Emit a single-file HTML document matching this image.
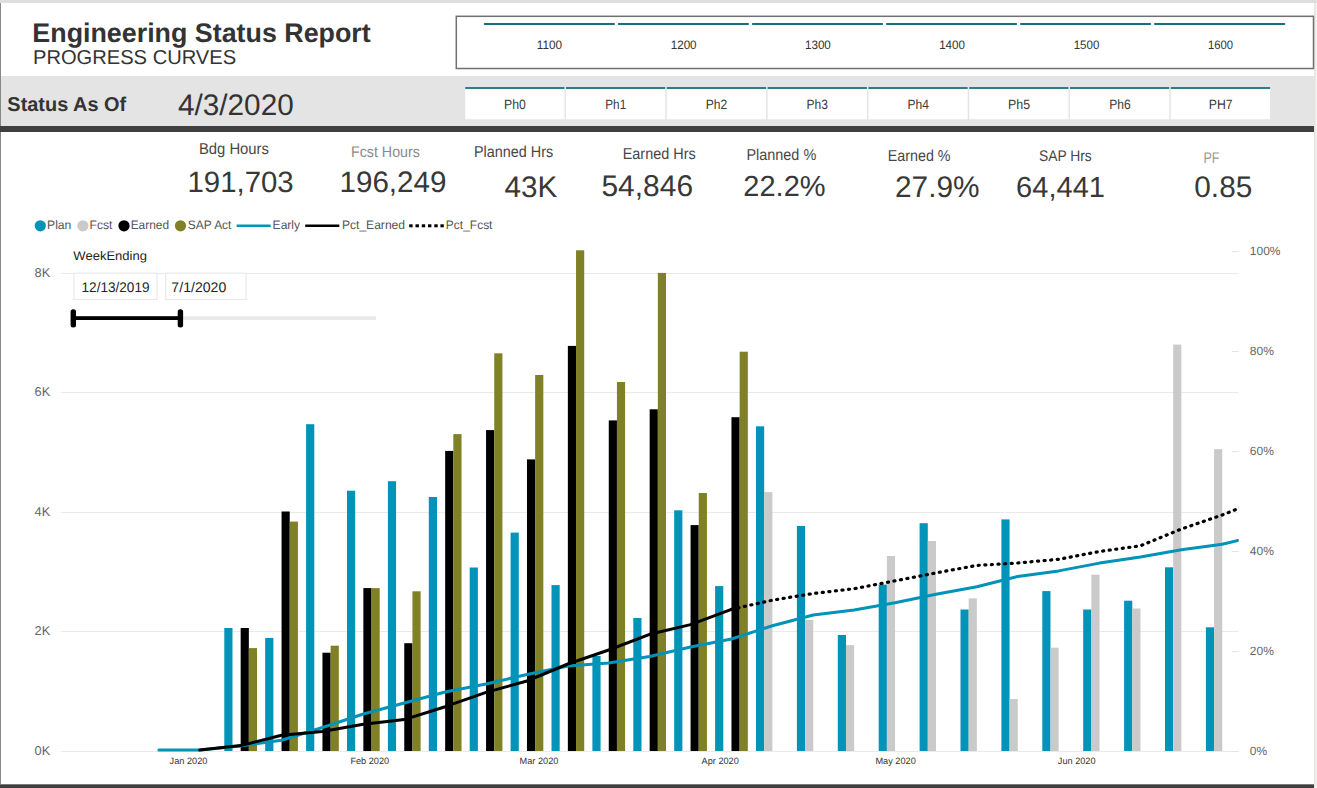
<!DOCTYPE html>
<html><head><meta charset="utf-8"><title>Engineering Status Report</title>
<style>
html,body{margin:0;padding:0;background:#F3F2F1;overflow:hidden;}
svg{display:block;font-family:"Liberation Sans", sans-serif;text-rendering:geometricPrecision;}
</style></head>
<body>
<svg width="1317" height="788" viewBox="0 0 1317 788">
<defs><clipPath id="pc"><rect x="61" y="240" width="1177.7" height="520"/></clipPath></defs>
<rect x="0" y="0" width="1317" height="788" fill="#F3F2F1"/>
<rect x="0" y="0" width="1314" height="788" fill="#FFFFFF"/>
<rect x="1314" y="0" width="1.5" height="788" fill="#E5E5E5"/>
<rect x="0" y="0" width="1317" height="3" fill="#DEDEDE"/>
<rect x="0" y="3" width="1" height="781" fill="#888888"/>
<rect x="0" y="784" width="1314" height="1" fill="#7A7A7A"/>
<rect x="0" y="785" width="1314" height="3" fill="#404040"/>
<!-- title -->
<!-- slicer box -->
<rect x="456.3" y="16.3" width="857.2" height="52.2" fill="#FFF" stroke="#707070" stroke-width="1.5"/>
<rect x="483.70" y="22.9" width="131.3" height="2" rx="1" fill="#15707F"/><rect x="617.76" y="22.9" width="131.3" height="2" rx="1" fill="#15707F"/><rect x="751.82" y="22.9" width="131.3" height="2" rx="1" fill="#15707F"/><rect x="885.88" y="22.9" width="131.3" height="2" rx="1" fill="#15707F"/><rect x="1019.94" y="22.9" width="131.3" height="2" rx="1" fill="#15707F"/><rect x="1154.00" y="22.9" width="131.3" height="2" rx="1" fill="#15707F"/>
<!-- gray band -->
<rect x="1" y="76" width="1313" height="50" fill="#E4E4E4"/>
<rect x="0" y="126" width="1314" height="6" fill="#404040"/>
<rect x="465.2" y="87" width="99.3" height="32.3" fill="#FFFFFF"/><rect x="465.2" y="87" width="99.3" height="2" fill="#2B7E8C"/><rect x="566.0" y="87" width="99.3" height="32.3" fill="#FFFFFF"/><rect x="566.0" y="87" width="99.3" height="2" fill="#2B7E8C"/><rect x="666.8" y="87" width="99.3" height="32.3" fill="#FFFFFF"/><rect x="666.8" y="87" width="99.3" height="2" fill="#2B7E8C"/><rect x="767.6" y="87" width="99.3" height="32.3" fill="#FFFFFF"/><rect x="767.6" y="87" width="99.3" height="2" fill="#2B7E8C"/><rect x="868.4" y="87" width="99.3" height="32.3" fill="#FFFFFF"/><rect x="868.4" y="87" width="99.3" height="2" fill="#2B7E8C"/><rect x="969.2" y="87" width="99.3" height="32.3" fill="#FFFFFF"/><rect x="969.2" y="87" width="99.3" height="2" fill="#2B7E8C"/><rect x="1070.0" y="87" width="99.3" height="32.3" fill="#FFFFFF"/><rect x="1070.0" y="87" width="99.3" height="2" fill="#2B7E8C"/><rect x="1170.8" y="87" width="99.3" height="32.3" fill="#FFFFFF"/><rect x="1170.8" y="87" width="99.3" height="2" fill="#2B7E8C"/>
<!-- KPIs -->
<!-- legend -->
<circle cx="40.3" cy="225.8" r="5.6" fill="#0193B8"/><circle cx="82.9" cy="225.8" r="5.6" fill="#CACACA"/><circle cx="124.0" cy="225.8" r="5.6" fill="#000000"/><circle cx="180.5" cy="225.8" r="5.6" fill="#808026"/><line x1="236.6" y1="225.7" x2="270.6" y2="225.7" stroke="#0193B8" stroke-width="2.5"/><line x1="305.2" y1="225.7" x2="339.3" y2="225.7" stroke="#000" stroke-width="2.5"/><rect x="409.20" y="224.3" width="3.4" height="3" fill="#000"/><rect x="415.50" y="224.3" width="3.4" height="3" fill="#000"/><rect x="421.80" y="224.3" width="3.4" height="3" fill="#000"/><rect x="428.00" y="224.3" width="3.4" height="3" fill="#000"/><rect x="434.30" y="224.3" width="3.4" height="3" fill="#000"/><rect x="440.40" y="224.3" width="3.4" height="3" fill="#000"/>
<!-- chart -->
<line x1="61" y1="273.5" x2="1238.7" y2="273.5" stroke="#EAEAEA" stroke-width="1"/>
<line x1="61" y1="392.5" x2="1238.7" y2="392.5" stroke="#EAEAEA" stroke-width="1"/>
<line x1="61" y1="512.5" x2="1238.7" y2="512.5" stroke="#EAEAEA" stroke-width="1"/>
<line x1="61" y1="631.5" x2="1238.7" y2="631.5" stroke="#EAEAEA" stroke-width="1"/>
<line x1="61" y1="751.5" x2="1238.7" y2="751.5" stroke="#EAEAEA" stroke-width="1"/>
<line x1="1232" y1="251.5" x2="1238.7" y2="251.5" stroke="#E6E6E6" stroke-width="1"/>
<line x1="1232" y1="351.5" x2="1238.7" y2="351.5" stroke="#E6E6E6" stroke-width="1"/>
<line x1="1232" y1="451.5" x2="1238.7" y2="451.5" stroke="#E6E6E6" stroke-width="1"/>
<line x1="1232" y1="551.5" x2="1238.7" y2="551.5" stroke="#E6E6E6" stroke-width="1"/>
<line x1="1232" y1="651.5" x2="1238.7" y2="651.5" stroke="#E6E6E6" stroke-width="1"/>
<line x1="1232" y1="751.5" x2="1238.7" y2="751.5" stroke="#E6E6E6" stroke-width="1"/>
<text x="50.2" y="277.3" text-anchor="end" font-size="12.8" fill="#666">8K</text>
<text x="50.2" y="396.3" text-anchor="end" font-size="12.8" fill="#666">6K</text>
<text x="50.2" y="516.3" text-anchor="end" font-size="12.8" fill="#666">4K</text>
<text x="50.2" y="635.3" text-anchor="end" font-size="12.8" fill="#666">2K</text>
<text x="50.2" y="755.3" text-anchor="end" font-size="12.8" fill="#666">0K</text>
<text x="1249.8" y="754.9" font-size="12" fill="#666">0%</text>
<text x="1249.8" y="654.9" font-size="12" fill="#666">20%</text>
<text x="1249.8" y="554.9" font-size="12" fill="#666">40%</text>
<text x="1249.8" y="454.9" font-size="12" fill="#666">60%</text>
<text x="1249.8" y="354.9" font-size="12" fill="#666">80%</text>
<text x="1249.8" y="254.9" font-size="12" fill="#666">100%</text>
<text x="188.5" y="764.3" text-anchor="middle" font-size="9.2" fill="#333">Jan 2020</text>
<text x="369.8" y="764.3" text-anchor="middle" font-size="9.2" fill="#333">Feb 2020</text>
<text x="539" y="764.3" text-anchor="middle" font-size="9.2" fill="#333">Mar 2020</text>
<text x="720.2" y="764.3" text-anchor="middle" font-size="9.2" fill="#333">Apr 2020</text>
<text x="895.6" y="764.3" text-anchor="middle" font-size="9.2" fill="#333">May 2020</text>
<text x="1076.7" y="764.3" text-anchor="middle" font-size="9.2" fill="#333">Jun 2020</text>
<rect x="224.30" y="628.0" width="8.18" height="123.0" fill="#0193B8"/>
<rect x="240.66" y="628.0" width="8.18" height="123.0" fill="#000000"/>
<rect x="248.84" y="648.1" width="8.18" height="102.9" fill="#808026"/>
<rect x="265.20" y="637.9" width="8.18" height="113.1" fill="#0193B8"/>
<rect x="281.56" y="511.5" width="8.18" height="239.5" fill="#000000"/>
<rect x="289.74" y="521.6" width="8.18" height="229.4" fill="#808026"/>
<rect x="306.10" y="424.2" width="8.18" height="326.8" fill="#0193B8"/>
<rect x="322.46" y="652.7" width="8.18" height="98.3" fill="#000000"/>
<rect x="330.64" y="645.7" width="8.18" height="105.3" fill="#808026"/>
<rect x="347.00" y="490.7" width="8.18" height="260.3" fill="#0193B8"/>
<rect x="363.36" y="588.1" width="8.18" height="162.9" fill="#000000"/>
<rect x="371.54" y="588.1" width="8.18" height="162.9" fill="#808026"/>
<rect x="387.90" y="481.2" width="8.18" height="269.8" fill="#0193B8"/>
<rect x="404.26" y="643.2" width="8.18" height="107.8" fill="#000000"/>
<rect x="412.44" y="591.3" width="8.18" height="159.7" fill="#808026"/>
<rect x="428.80" y="497.0" width="8.18" height="254.0" fill="#0193B8"/>
<rect x="445.16" y="450.9" width="8.18" height="300.1" fill="#000000"/>
<rect x="453.34" y="434.1" width="8.18" height="316.9" fill="#808026"/>
<rect x="469.70" y="567.5" width="8.18" height="183.5" fill="#0193B8"/>
<rect x="486.06" y="430.1" width="8.18" height="320.9" fill="#000000"/>
<rect x="494.24" y="353.3" width="8.18" height="397.7" fill="#808026"/>
<rect x="510.60" y="532.6" width="8.18" height="218.4" fill="#0193B8"/>
<rect x="526.96" y="459.4" width="8.18" height="291.6" fill="#000000"/>
<rect x="535.14" y="375.0" width="8.18" height="376.0" fill="#808026"/>
<rect x="551.50" y="585.1" width="8.18" height="165.9" fill="#0193B8"/>
<rect x="567.86" y="345.9" width="8.18" height="405.1" fill="#000000"/>
<rect x="576.04" y="250.3" width="8.18" height="500.7" fill="#808026"/>
<rect x="592.40" y="656.0" width="8.18" height="95.0" fill="#0193B8"/>
<rect x="608.76" y="420.4" width="8.18" height="330.6" fill="#000000"/>
<rect x="616.94" y="382.0" width="8.18" height="369.0" fill="#808026"/>
<rect x="633.30" y="618.0" width="8.18" height="133.0" fill="#0193B8"/>
<rect x="649.66" y="409.3" width="8.18" height="341.7" fill="#000000"/>
<rect x="657.84" y="272.9" width="8.18" height="478.1" fill="#808026"/>
<rect x="674.20" y="510.3" width="8.18" height="240.7" fill="#0193B8"/>
<rect x="690.56" y="525.1" width="8.18" height="225.9" fill="#000000"/>
<rect x="698.74" y="493.0" width="8.18" height="258.0" fill="#808026"/>
<rect x="715.10" y="586.1" width="8.18" height="164.9" fill="#0193B8"/>
<rect x="731.46" y="417.2" width="8.18" height="333.8" fill="#000000"/>
<rect x="739.64" y="351.7" width="8.18" height="399.3" fill="#808026"/>
<rect x="756.00" y="426.3" width="8.18" height="324.7" fill="#0193B8"/>
<rect x="764.18" y="492.1" width="8.18" height="258.9" fill="#CACACA"/>
<rect x="796.90" y="525.9" width="8.18" height="225.1" fill="#0193B8"/>
<rect x="805.08" y="619.8" width="8.18" height="131.2" fill="#CACACA"/>
<rect x="837.80" y="635.0" width="8.18" height="116.0" fill="#0193B8"/>
<rect x="845.98" y="645.1" width="8.18" height="105.9" fill="#CACACA"/>
<rect x="878.70" y="584.6" width="8.18" height="166.4" fill="#0193B8"/>
<rect x="886.88" y="556.0" width="8.18" height="195.0" fill="#CACACA"/>
<rect x="919.60" y="523.2" width="8.18" height="227.8" fill="#0193B8"/>
<rect x="927.78" y="541.0" width="8.18" height="210.0" fill="#CACACA"/>
<rect x="960.50" y="609.5" width="8.18" height="141.5" fill="#0193B8"/>
<rect x="968.68" y="598.4" width="8.18" height="152.6" fill="#CACACA"/>
<rect x="1001.40" y="519.4" width="8.18" height="231.6" fill="#0193B8"/>
<rect x="1009.58" y="699.0" width="8.18" height="52.0" fill="#CACACA"/>
<rect x="1042.30" y="591.1" width="8.18" height="159.9" fill="#0193B8"/>
<rect x="1050.48" y="647.7" width="8.18" height="103.3" fill="#CACACA"/>
<rect x="1083.20" y="609.5" width="8.18" height="141.5" fill="#0193B8"/>
<rect x="1091.38" y="574.7" width="8.18" height="176.3" fill="#CACACA"/>
<rect x="1124.10" y="600.7" width="8.18" height="150.3" fill="#0193B8"/>
<rect x="1132.28" y="608.5" width="8.18" height="142.5" fill="#CACACA"/>
<rect x="1165.00" y="567.3" width="8.18" height="183.7" fill="#0193B8"/>
<rect x="1173.18" y="344.6" width="8.18" height="406.4" fill="#CACACA"/>
<rect x="1205.90" y="627.3" width="8.18" height="123.7" fill="#0193B8"/>
<rect x="1214.08" y="449.2" width="8.18" height="301.8" fill="#CACACA"/>
<g clip-path="url(#pc)">
<polyline points="158.86,750.00 199.76,750.00 240.66,746.00 281.56,740.20 322.46,727.50 363.36,714.00 404.26,703.00 445.16,692.00 486.06,684.00 526.96,674.50 567.86,666.00 608.76,663.00 649.66,656.50 690.56,647.00 731.46,639.00 772.36,625.80 813.26,615.00 854.16,610.00 895.06,602.70 935.96,594.20 976.86,586.70 1017.76,576.40 1058.66,570.90 1099.56,563.10 1140.46,557.00 1181.36,549.70 1222.26,544.20 1263.16,534.70" fill="none" stroke="#0193B8" stroke-width="3" stroke-linejoin="round" stroke-linecap="round"/>
<polyline points="199.76,750.00 240.66,745.60 281.56,735.30 322.46,731.50 363.36,724.20 404.26,719.60 445.16,706.70 486.06,692.40 526.96,681.00 567.86,664.00 608.76,650.00 649.66,634.30 690.56,624.60 731.46,609.30" fill="none" stroke="#000000" stroke-width="3" stroke-linejoin="round" stroke-linecap="round"/>
<polyline points="731.46,609.30 772.36,600.20 813.26,593.50 854.16,588.70 895.06,580.80 935.96,572.90 976.86,565.40 1017.76,563.00 1058.66,559.30 1099.56,551.50 1140.46,545.80 1181.36,529.00 1222.26,515.00 1263.16,498.50" fill="none" stroke="#000000" stroke-width="3.2" stroke-dasharray="1.1 5.5" stroke-linecap="round"/>
</g>
<!-- week ending slicer -->
<rect x="73.9" y="273.1" width="83.1" height="26.5" fill="#FFF" stroke="#E6E6E6" stroke-width="1"/>
<rect x="165.7" y="273.1" width="80.3" height="26.5" fill="#FFF" stroke="#E6E6E6" stroke-width="1"/>
<rect x="183" y="316.3" width="193" height="3.6" fill="#E8E8E8"/>
<rect x="72" y="316.2" width="109" height="3.8" fill="#000"/>
<rect x="70.6" y="309.3" width="5.4" height="18.3" rx="2.5" fill="#000"/>
<rect x="177.7" y="309.3" width="5.4" height="18.3" rx="2.5" fill="#000"/>
<text x="32.37" y="41.90" font-size="26.83" font-weight="bold" fill="#333333">Engineering Status Report</text>
<text x="32.98" y="64.30" font-size="20.14" font-weight="normal" fill="#333333">PROGRESS CURVES</text>
<text x="7.34" y="110.90" font-size="19.96" font-weight="bold" fill="#333333">Status As Of</text>
<text x="177.97" y="115.40" font-size="29.74" font-weight="normal" fill="#333333">4/3/2020</text>
<text x="198.89" y="154.10" font-size="15.80" font-weight="normal" fill="#474747" textLength="70.09" lengthAdjust="spacingAndGlyphs">Bdg Hours</text>
<text x="187.50" y="191.68" font-size="29.39" font-weight="normal" fill="#383838">191,703</text>
<text x="351.00" y="156.90" font-size="15.40" font-weight="normal" fill="#8A8A8A" textLength="68.85" lengthAdjust="spacingAndGlyphs">Fcst Hours</text>
<text x="339.47" y="192.10" font-size="29.60" font-weight="normal" fill="#383838">196,249</text>
<text x="473.93" y="157.10" font-size="15.80" font-weight="normal" fill="#474747" textLength="79.25" lengthAdjust="spacingAndGlyphs">Planned Hrs</text>
<text x="504.44" y="196.88" font-size="29.68" font-weight="normal" fill="#383838">43K</text>
<text x="622.67" y="159.00" font-size="15.80" font-weight="normal" fill="#474747" textLength="73.14" lengthAdjust="spacingAndGlyphs">Earned Hrs</text>
<text x="601.48" y="195.50" font-size="29.94" font-weight="normal" fill="#383838">54,846</text>
<text x="746.41" y="160.10" font-size="15.80" font-weight="normal" fill="#474747" textLength="69.84" lengthAdjust="spacingAndGlyphs">Planned %</text>
<text x="743.32" y="195.96" font-size="29.02" font-weight="normal" fill="#383838">22.2%</text>
<text x="887.81" y="160.50" font-size="15.80" font-weight="normal" fill="#474747" textLength="62.72" lengthAdjust="spacingAndGlyphs">Earned %</text>
<text x="895.03" y="196.60" font-size="29.84" font-weight="normal" fill="#383838">27.9%</text>
<text x="1038.91" y="160.50" font-size="15.40" font-weight="normal" fill="#474747" textLength="52.90" lengthAdjust="spacingAndGlyphs">SAP Hrs</text>
<text x="1016.10" y="196.84" font-size="29.07" font-weight="normal" fill="#383838">64,441</text>
<text x="1203.39" y="162.50" font-size="15.40" font-weight="normal" fill="#999999" textLength="16.15" lengthAdjust="spacingAndGlyphs">PF</text>
<text x="1194.30" y="197.20" font-size="29.79" font-weight="normal" fill="#383838">0.85</text>
<text x="47.09" y="228.90" font-size="12.30" font-weight="normal" fill="#555555" textLength="24.28" lengthAdjust="spacingAndGlyphs">Plan</text>
<text x="89.60" y="228.90" font-size="12.30" font-weight="normal" fill="#555555" textLength="22.86" lengthAdjust="spacingAndGlyphs">Fcst</text>
<text x="130.70" y="228.90" font-size="12.30" font-weight="normal" fill="#555555" textLength="38.37" lengthAdjust="spacingAndGlyphs">Earned</text>
<text x="187.81" y="228.90" font-size="12.30" font-weight="normal" fill="#555555" textLength="43.59" lengthAdjust="spacingAndGlyphs">SAP Act</text>
<text x="272.60" y="228.90" font-size="12.30" font-weight="normal" fill="#555555" textLength="27.50" lengthAdjust="spacingAndGlyphs">Early</text>
<text x="341.98" y="228.90" font-size="12.30" font-weight="normal" fill="#555555" textLength="63.05" lengthAdjust="spacingAndGlyphs">Pct_Earned</text>
<text x="445.87" y="228.90" font-size="12.30" font-weight="normal" fill="#555555" textLength="46.60" lengthAdjust="spacingAndGlyphs">Pct_Fcst</text>
<text x="73.39" y="260.00" font-size="12.50" font-weight="normal" fill="#252423" textLength="73.60" lengthAdjust="spacingAndGlyphs">WeekEnding</text>
<text x="81.57" y="291.60" font-size="14.00" font-weight="normal" fill="#252423" textLength="67.96" lengthAdjust="spacingAndGlyphs">12/13/2019</text>
<text x="171.38" y="291.60" font-size="14.00" font-weight="normal" fill="#252423" textLength="54.88" lengthAdjust="spacingAndGlyphs">7/1/2020</text>
<text x="536.80" y="48.50" font-size="12.20" font-weight="normal" fill="#333333" textLength="25.20" lengthAdjust="spacingAndGlyphs">1100</text>
<text x="670.69" y="48.50" font-size="12.20" font-weight="normal" fill="#333333" textLength="25.90" lengthAdjust="spacingAndGlyphs">1200</text>
<text x="804.95" y="48.50" font-size="12.20" font-weight="normal" fill="#333333" textLength="25.92" lengthAdjust="spacingAndGlyphs">1300</text>
<text x="939.17" y="48.50" font-size="12.20" font-weight="normal" fill="#333333" textLength="25.80" lengthAdjust="spacingAndGlyphs">1400</text>
<text x="1073.68" y="48.50" font-size="12.20" font-weight="normal" fill="#333333" textLength="25.66" lengthAdjust="spacingAndGlyphs">1500</text>
<text x="1207.91" y="48.50" font-size="12.20" font-weight="normal" fill="#333333" textLength="25.11" lengthAdjust="spacingAndGlyphs">1600</text>
<text x="503.99" y="108.60" font-size="13.60" font-weight="normal" fill="#3A3A3A" textLength="21.81" lengthAdjust="spacingAndGlyphs">Ph0</text>
<text x="605.30" y="108.60" font-size="13.60" font-weight="normal" fill="#3A3A3A" textLength="20.88" lengthAdjust="spacingAndGlyphs">Ph1</text>
<text x="705.63" y="108.60" font-size="13.60" font-weight="normal" fill="#3A3A3A" textLength="21.53" lengthAdjust="spacingAndGlyphs">Ph2</text>
<text x="806.49" y="108.60" font-size="13.60" font-weight="normal" fill="#3A3A3A" textLength="21.40" lengthAdjust="spacingAndGlyphs">Ph3</text>
<text x="907.43" y="108.60" font-size="13.60" font-weight="normal" fill="#3A3A3A" textLength="21.40" lengthAdjust="spacingAndGlyphs">Ph4</text>
<text x="1007.98" y="108.60" font-size="13.60" font-weight="normal" fill="#3A3A3A" textLength="22.07" lengthAdjust="spacingAndGlyphs">Ph5</text>
<text x="1109.20" y="108.60" font-size="13.60" font-weight="normal" fill="#3A3A3A" textLength="21.47" lengthAdjust="spacingAndGlyphs">Ph6</text>
<text x="1208.80" y="108.60" font-size="13.60" font-weight="normal" fill="#3A3A3A" textLength="23.78" lengthAdjust="spacingAndGlyphs">PH7</text>
</svg>
</body></html>
